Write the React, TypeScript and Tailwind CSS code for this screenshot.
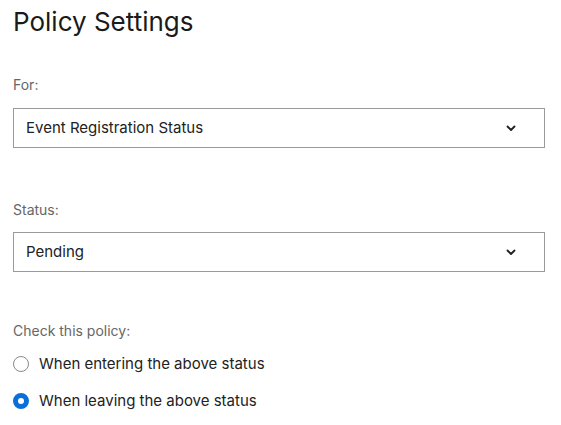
import { useState } from "react";

const FONT = { fontFamily: "Inter, Roboto, 'Liberation Sans', sans-serif" };

function Chevron() {
    return (
        <svg width="10" height="7" viewBox="0 0 10 7" className="shrink-0">
            <path d="M1.5 1.5 L5 5 L8.5 1.5" fill="none" stroke="#1f1f1f" strokeWidth="1.8" strokeLinecap="round" strokeLinejoin="round" />
        </svg>
    );
}

function SelectBox({ value }: { value: string }) {
    return (
        <div className="h-[40px] border border-[#9a9a9a] bg-white flex items-center justify-between pl-[12px] pr-[28px]">
            <span className="text-[15px] text-[#222]">{value}</span>
            <Chevron />
        </div>
    );
}

function Radio({ checked, label, onClick, className }: { checked: boolean; label: string; onClick: () => void; className?: string }) {
    return (
        <button type="button" onClick={onClick} className={`flex items-center h-[24px] gap-[10px] ${className ?? ""}`}>
            {checked
                ? <span className="w-[16px] h-[16px] rounded-full border-[5px] border-[#0b6fd9] bg-white" />
                : <span className="w-[16px] h-[16px] rounded-full border border-[#8a8a8a] bg-white" />}
            <span className="text-[15px] text-[#222]">{label}</span>
        </button>
    );
}

export default function App() {
    const [when, setWhen] = useState<"enter" | "leave">("leave");

    return (
        <div className="w-[561px] h-[425px] bg-white pl-[13px] pr-[16px] pt-[6px]" style={FONT}>
            <h1 className="text-[26px] leading-[32px] text-[#1a1a1a]">Policy Settings</h1>

            <p className="mt-[37px] text-[14px] leading-[20px] text-[#666]">For:</p>
            <div className="mt-[13px]">
                <SelectBox value="Event Registration Status" />
            </div>

            <p className="mt-[52px] text-[14px] leading-[20px] text-[#666]">Status:</p>
            <div className="mt-[12px]">
                <SelectBox value="Pending" />
            </div>

            <p className="mt-[49px] text-[14px] leading-[20px] text-[#666]">Check this policy:</p>
            <Radio className="mt-[11px]" checked={when === "enter"} label="When entering the above status" onClick={() => setWhen("enter")} />
            <Radio className="mt-[13px]" checked={when === "leave"} label="When leaving the above status" onClick={() => setWhen("leave")} />
        </div>
    );
}
